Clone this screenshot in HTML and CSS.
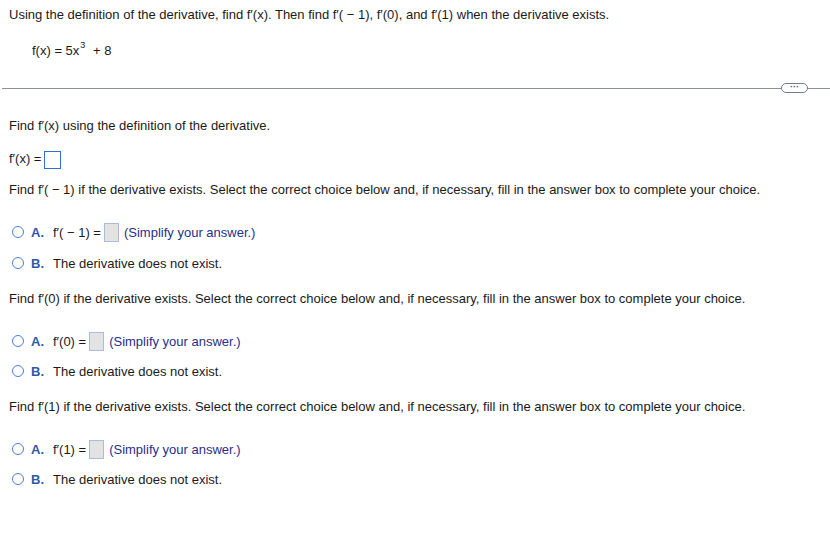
FILE: index.html
```html
<!DOCTYPE html>
<html>
<head>
<meta charset="utf-8">
<link rel="stylesheet" href="styles.css">
</head>
<body>
<div class="page">
  <div class="top">
    <p class="line title">Using the definition of the derivative, find f′(x). Then find f′( − 1), f′(0), and f′(1) when the derivative exists.</p>
    <p class="line func">f(x) = 5x<sup class="exp">3</sup> + 8</p>
  </div>
  <div class="divider">
    <span class="rule"></span>
    <span class="pill">&middot;&middot;&middot;</span>
    <span class="rule tail"></span>
  </div>
  <div class="body">
    <p class="line q1">Find f′(x) using the definition of the derivative.</p>
    <p class="line ans">f′(x) = <span class="box"></span></p>

    <p class="line find first">Find f′( − 1) if the derivative exists. Select the correct choice below and, if necessary, fill in the answer box to complete your choice.</p>
    <div class="opt optA"><span class="radio"></span><span class="let">A.</span><span class="expr">f′( − 1) =</span><span class="sbox"></span><span class="hint">(Simplify your answer.)</span></div>
    <div class="opt optB"><span class="radio"></span><span class="let">B.</span><span class="expr">The derivative does not exist.</span></div>

    <p class="line find">Find f′(0) if the derivative exists. Select the correct choice below and, if necessary, fill in the answer box to complete your choice.</p>
    <div class="opt optA"><span class="radio"></span><span class="let">A.</span><span class="expr">f′(0) =</span><span class="sbox"></span><span class="hint">(Simplify your answer.)</span></div>
    <div class="opt optB tight"><span class="radio"></span><span class="let">B.</span><span class="expr">The derivative does not exist.</span></div>

    <p class="line find">Find f′(1) if the derivative exists. Select the correct choice below and, if necessary, fill in the answer box to complete your choice.</p>
    <div class="opt optA"><span class="radio"></span><span class="let">A.</span><span class="expr">f′(1) =</span><span class="sbox"></span><span class="hint">(Simplify your answer.)</span></div>
    <div class="opt optB tight"><span class="radio"></span><span class="let">B.</span><span class="expr">The derivative does not exist.</span></div>
  </div>
</div>
</body>
</html>
```
FILE: styles.css
```css
html, body {
  margin: 0;
  padding: 0;
  background: #ffffff;
}
.page {
  font-family: "Liberation Sans", Arial, sans-serif;
  font-size: 13px;
  color: #1a1a1a;
}
.line {
  margin: 0;
  line-height: 16px;
  white-space: nowrap;
}
.top {
  padding: 7px 0 0 9px;
}
.func {
  margin-top: 17px;
  padding-left: 23px;
  line-height: 22px;
}
.exp {
  font-size: 9px;
  position: relative;
  top: -7px;
  vertical-align: baseline;
  margin-left: 1px;
  margin-right: 4px;
}
.divider {
  display: flex;
  align-items: center;
  margin-top: 20px;
  padding-left: 2px;
  height: 10px;
}
.rule {
  flex: 1;
  height: 1px;
  background: #8a909c;
}
.rule.tail {
  flex: 0 0 22px;
}
.pill {
  width: 25px;
  height: 8px;
  border: 1px solid #6f7d90;
  border-radius: 5px;
  font-size: 9px;
  line-height: 6px;
  text-align: center;
  color: #4a5568;
  font-weight: bold;
  overflow: hidden;
}
.body {
  padding-left: 9px;
  padding-top: 25px;
}
.ans {
  margin-top: 16px;
  display: flex;
  align-items: center;
  height: 17px;
}
.box {
  display: inline-block;
  width: 15px;
  height: 16px;
  border: 1px solid #2f6fd6;
  margin-left: 3px;
  margin-top: 2px;
}
.find.first {
  margin-top: 15px;
}
.opt {
  display: flex;
  align-items: center;
  height: 20px;
  padding-left: 3px;
}
.optA {
  margin-top: 24px;
}
.optB {
  margin-top: 11px;
}
.optB.tight {
  margin-top: 10px;
}
.optB + .find {
  margin-top: 18px;
}
.radio {
  width: 10px;
  height: 10px;
  border: 1px solid #4a7fd4;
  border-radius: 50%;
  margin-right: 7px;
}
.let {
  font-weight: bold;
  color: #2e5aa8;
  width: 22px;
}
.expr {
  color: #1a1a1a;
}
.sbox {
  width: 13px;
  height: 17px;
  background: #e3e3e3;
  border: 1px solid #a9bcd8;
  margin-left: 3px;
  margin-right: 5px;
}
.hint {
  color: #1f2f8a;
}
```
